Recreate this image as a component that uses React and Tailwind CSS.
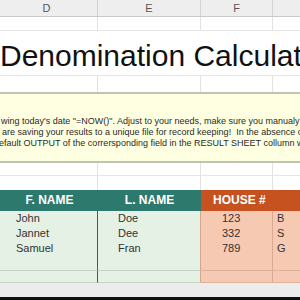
import React from 'react';

const cols = 'grid grid-cols-[98px_103px_72px_1fr]';

function BlankRow({ h }) {
    return (
        <div className={`${cols} ${h} bg-white`}>
            <div className="border-r border-[#e2e2e2]" />
            <div className="border-r border-[#e2e2e2]" />
            <div className="border-r border-[#e2e2e2]" />
            <div />
        </div>
    );
}

const people = [
    { first: 'John', last: 'Doe', house: '123', st: 'B' },
    { first: 'Jannet', last: 'Dee', house: '332', st: 'S' },
    { first: 'Samuel', last: 'Fran', house: '789', st: 'G' },
    { first: '', last: '', house: '', st: '' },
    { first: '', last: '', house: '', st: '' },
];

export default function App() {
    return (
        <div className="w-[300px] h-[300px] overflow-hidden bg-white flex flex-col font-['Liberation_Sans',Arial,sans-serif]">
            {/* column letters */}
            <div className={`${cols} h-[17px] shrink-0 bg-[#eeeeee] border-b border-[#c9c9c9] text-[11px] text-[#555] leading-[16px]`}>
                <div className="border-r border-[#d2d2d2] text-center pr-[4px]">D</div>
                <div className="border-r border-[#d2d2d2] text-center">E</div>
                <div className="border-r border-[#d2d2d2] text-center">F</div>
                <div />
            </div>
            <BlankRow h="h-[14px] shrink-0 border-b border-[#e6e6e6]" />

            {/* title */}
            <div className="h-[45px] shrink-0 border-b border-[#e6e6e6] pt-[10px] whitespace-nowrap text-[30px] leading-[30px] text-[#111] overflow-hidden">
                Denomination Calculator
            </div>
            <BlankRow h="h-[16px] shrink-0" />

            {/* note box */}
            <div className="h-[71px] shrink-0 bg-[#ffffe1] border-y-2 border-[#b9c6b1] pt-[22px] whitespace-nowrap overflow-hidden text-[9px] leading-[11px] text-[#2a2a2a]">
                <div className="pl-[1px]">wing today's date "=NOW()". Adjust to your needs, make sure you manualy update</div>
                <div className="pl-[2px]">are saving your results to a unique file for record keeping!&nbsp; In the absence of</div>
                <div className="-ml-[1px]">efault OUTPUT of the corrersponding field in the RESULT SHEET collumn will</div>
            </div>

            <BlankRow h="h-[13px] shrink-0 border-b border-[#e6e6e6]" />
            <BlankRow h="h-[14px] shrink-0" />

            {/* table header */}
            <div className={`${cols} h-[21px] shrink-0 text-white font-bold text-[12px] leading-[21px]`}>
                <div className="bg-[#2d796d] text-center pl-[1px]">F. NAME</div>
                <div className="bg-[#2d796d] text-center">L. NAME</div>
                <div className="bg-[#c5521f] col-span-2 pl-[12px]">HOUSE #</div>
            </div>

            {/* table rows */}
            {people.map((p, i) => (
                <div
                    key={i}
                    className={`${cols} ${i === 4 ? 'h-[12px]' : 'h-[15px]'} shrink-0 text-[11px] leading-[15px] text-[#333]`}
                >
                    <div className="bg-[#e4f1e4] border-r border-[#555] border-b border-b-[#c5d3c5] pl-[16px]">{p.first}</div>
                    <div className="bg-[#e4f1e4] border-r border-[#d4a58e] border-b border-b-[#c5d3c5] pl-[20px]">{p.last}</div>
                    <div className="bg-[#f6c9b3] border-r border-[#dba893] border-b border-b-[#e0b09b] pl-[21px]">{p.house}</div>
                    <div className="bg-[#f6c9b3] border-b border-[#e0b09b] pl-[4px]">{p.st}</div>
                </div>
            ))}

            <div className="h-[14px] shrink-0 bg-[#ececec]" />
            <div className="flex-1 bg-[#111]" />
        </div>
    );
}
